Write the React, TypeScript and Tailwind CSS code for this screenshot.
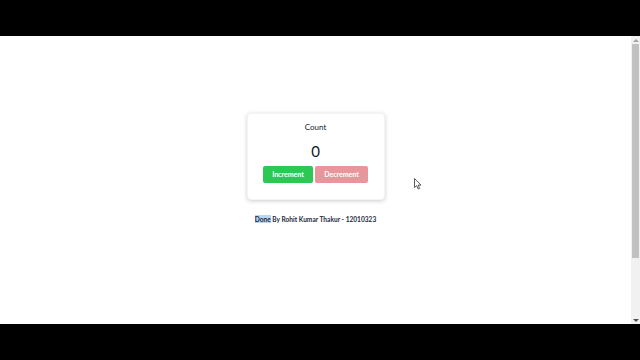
import React, { useState } from 'react';

export default function App() {
  const [count, setCount] = useState(0);

  return (
    <div className="w-[640px] h-[360px] flex flex-col bg-black overflow-hidden" style={{ fontFamily: 'Lato, "Noto Sans", sans-serif' }}>
      <div className="h-[36px] bg-black" />

      <div className="relative flex h-[288px] bg-white">
        <main className="flex-1 flex flex-col items-center pt-[77px]">
          <div className="w-[138px] h-[87px] rounded-[4px] bg-white border border-gray-100 shadow-[0_1px_4px_rgba(0,0,0,0.2)] flex flex-col items-center pt-[8px]">
            <h2 className="text-[8px] text-gray-900 leading-[10px]">Count</h2>
            <p className="mt-[11px] text-[15px] leading-[16px] text-gray-900">{count}</p>
            <div className="mt-[7px] flex gap-[2px]">
              <button
                onClick={() => setCount(count + 1)}
                className="w-[50px] h-[17px] rounded-[2px] bg-[#2bc954] text-white text-[7px] font-bold"
              >
                Increment
              </button>
              <button
                disabled={count === 0}
                onClick={() => setCount(count - 1)}
                className="w-[53px] h-[17px] rounded-[2px] bg-[#e8959c] text-white text-[7px] font-bold"
              >
                Decrement
              </button>
            </div>
          </div>

          <p className="mt-[14px] text-[6.6px] font-bold text-gray-800 leading-[10px]">
            <span className="bg-[#b9d6f5]">Done</span> By Rohit Kumar Thakur - 12010323
          </p>
        </main>

        <div className="w-[9px] bg-[#f1f1f1] flex flex-col items-center">
          <div className="h-[8px] flex items-center justify-center">
            <div className="w-0 h-0 border-l-[3px] border-r-[3px] border-b-[3px] border-l-transparent border-r-transparent border-b-[#a3a3a3]" />
          </div>
          <div className="w-[7px] h-[214px] bg-[#c1c1c1]" />
          <div className="flex-1" />
          <div className="h-[8px] flex items-center justify-center">
            <div className="w-0 h-0 border-l-[3px] border-r-[3px] border-t-[3px] border-l-transparent border-r-transparent border-t-[#505050]" />
          </div>
        </div>

        <svg className="absolute left-[414px] top-[142px]" width="8" height="12" viewBox="0 0 8 12">
          <path d="M0.5 0.5 L0.5 9.5 L2.7 7.6 L4.2 11 L5.6 10.4 L4.1 7.1 L7 7.1 Z" fill="white" stroke="#333" strokeWidth="0.8" strokeLinejoin="round" />
        </svg>
      </div>

      <div className="flex-1 bg-black" />
    </div>
  );
}
